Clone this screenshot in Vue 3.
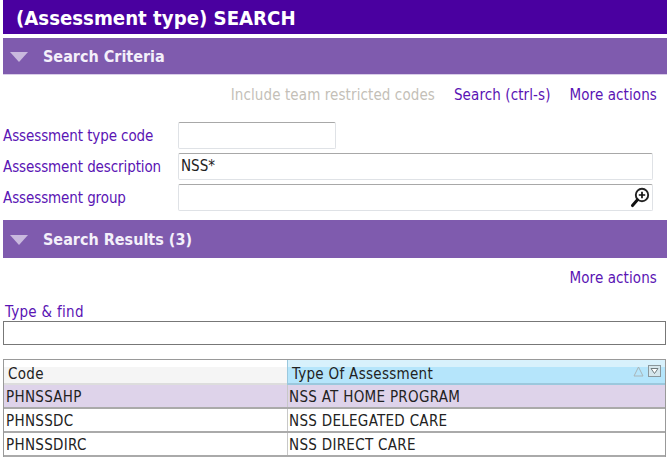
<script setup>
const rows = [
  { code: 'PHNSSAHP', type: 'NSS AT HOME PROGRAM', selected: true },
  { code: 'PHNSSDC', type: 'NSS DELEGATED CARE', selected: false },
  { code: 'PHNSSDIRC', type: 'NSS DIRECT CARE', selected: false }
]
</script>

<template>
  <div class="page">
    <h1 class="title">(Assessment type) SEARCH</h1>

    <div class="section">
      <span class="tri"></span>
      <span>Search Criteria</span>
    </div>

    <div class="actions first">
      <span class="muted">Include team restricted codes</span>
      <a class="link">Search (ctrl-s)</a>
      <a class="link">More actions</a>
    </div>

    <div class="form">
      <label>Assessment type code</label>
      <div class="field short"></div>
      <label>Assessment description</label>
      <div class="field">NSS*</div>
      <label>Assessment group</label>
      <div class="field lookup">
        <svg width="22" height="22" viewBox="0 0 22 22">
          <circle cx="13" cy="8" r="6.200" fill="#fff" stroke="#222" stroke-width="1.9" />
          <path d="M13 4.800v6.400M9.800 8h6.400" stroke="#111" stroke-width="1.7" />
          <path d="M8.500 12.800 3.500 18.600" stroke="#111" stroke-width="3" stroke-linecap="round" />
        </svg>
      </div>
    </div>

    <div class="section results">
      <span class="tri"></span>
      <span>Search Results (3)</span>
    </div>

    <div class="actions second">
      <a class="link">More actions</a>
    </div>

    <div class="find-label">Type &amp; find</div>
    <div class="find"></div>

    <div class="table">
      <div class="head">
        <div class="hcell">Code</div>
        <div class="hcell active">
          <span>Type Of Assessment</span>
          <span class="sort">
            <svg width="11" height="11" viewBox="0 0 11 11">
              <path d="M5.500 1 1 10h9z" fill="none" stroke="#a9b5b8" stroke-width="1" />
            </svg>
            <svg width="13" height="12" viewBox="0 0 13 12">
              <rect x=".5" y=".5" width="12" height="11" fill="#d5e6ec" stroke="#8a979c" />
              <path d="M3 3.500h7L6.500 8.500z" fill="#fff" stroke="#6f7c80" />
            </svg>
          </span>
        </div>
      </div>
      <div v-for="row in rows" :key="row.code" class="row" :class="{ selected: row.selected }">
        <div class="cell">{{ row.code }}</div>
        <div class="cell">{{ row.type }}</div>
      </div>
    </div>
  </div>
</template>

<style>
html, body { margin: 0; background: #fff; overflow: hidden; }
</style>

<style scoped>
.page {
  width: 667px;
  height: 457px;
  overflow: hidden;
  box-sizing: border-box;
  padding-left: 3px;
  font-family: "DejaVu Sans Condensed", "DejaVu Sans", sans-serif;
  font-stretch: condensed;
  font-size: 15px;
  color: #222;
  background: #fff;
}
.title {
  margin: 0 0 4px;
  height: 34px;
  line-height: 36px;
  padding-left: 13px;
  background: #4a00a0;
  color: #fff;
  font-size: 20.2px;
  font-weight: 700;
}
.section {
  display: flex;
  align-items: center;
  height: 37px;
  background: #7f5bae;
  color: #f4f0fa;
  font-size: 16px;
  font-weight: 700;
  padding-top: 1px;
  box-sizing: border-box;
  border-bottom: 1px solid #d9cde8;
}
.tri {
  width: 0;
  height: 0;
  margin: 0 15px 0 7px;
  border-left: 9px solid transparent;
  border-right: 9px solid transparent;
  border-top: 10px solid #c9b9de;
}
.actions {
  display: flex;
  justify-content: flex-end;
  gap: 19px;
  padding-right: 10px;
  letter-spacing: 0.1px;
}
.first { margin-top: 10px; height: 20px; line-height: 20px; }
.second { margin-top: 10px; height: 20px; line-height: 20px; }
.muted { color: #c4bfb8; }
.link { color: #5a14b4; }
.form {
  display: grid;
  grid-template-columns: 175px 475px;
  row-gap: 4px;
  margin-top: 17px;
  align-items: center;
}
.form label { color: #5a14b4; letter-spacing: -0.1px; }
.field {
  box-sizing: border-box;
  height: 27px;
  line-height: 25px;
  padding-left: 2px;
  background: #fff;
  border: 1px solid #dfe2e6;
  border-top: 1px solid #a8a8a8;
  border-radius: 2px;
  color: #222;
}
.short { width: 158px; }
.lookup {
  display: flex;
  justify-content: flex-end;
  align-items: center;
  padding-right: 1px;
}
.results { margin-top: 9px; height: 38px; border-bottom: 0; }
.find-label {
  margin-top: 15px;
  margin-left: 2px;
  height: 18px;
  line-height: 18px;
  color: #5a14b4;
  letter-spacing: 0.3px;
}
.find {
  box-sizing: border-box;
  width: 663px;
  height: 24px;
  border: 1px solid #777;
}
.table {
  box-sizing: border-box;
  width: 663px;
  margin-top: 14px;
  border: 1px solid #999;
  border-bottom: 0;
  letter-spacing: 0.3px;
}
.head {
  display: grid;
  grid-template-columns: 283px 1fr;
  height: 24px;
  border-bottom: 1px solid #e4e4e4;
}
.hcell {
  box-sizing: border-box;
  display: flex;
  justify-content: space-between;
  align-items: center;
  padding: 5px 4px 0 4px;
  background: linear-gradient(#fff 0 7px, #f5f5f5 7px 100%);
  border-bottom: 2px solid #ddd;
}
.hcell.active {
  background: linear-gradient(#d8f1fc 0 7px, #b5e5fb 7px 100%);
  border-bottom: 2px solid #9bc8dd;
  border-left: 1px solid #9bc8dd;
}
.sort {
  display: flex;
  align-items: center;
  gap: 4px;
  margin-top: -6px;
}
.row {
  display: grid;
  grid-template-columns: 283px 1fr;
  height: 22px;
  line-height: 25px;
  border-bottom: 2px solid #aaa;
}
.row.selected { background: #ded3ea; }
.cell {
  padding-left: 2px;
  white-space: nowrap;
  overflow: hidden;
}
.cell + .cell { border-left: 1px solid #c8c8c8; padding-left: 1px; }
</style>
